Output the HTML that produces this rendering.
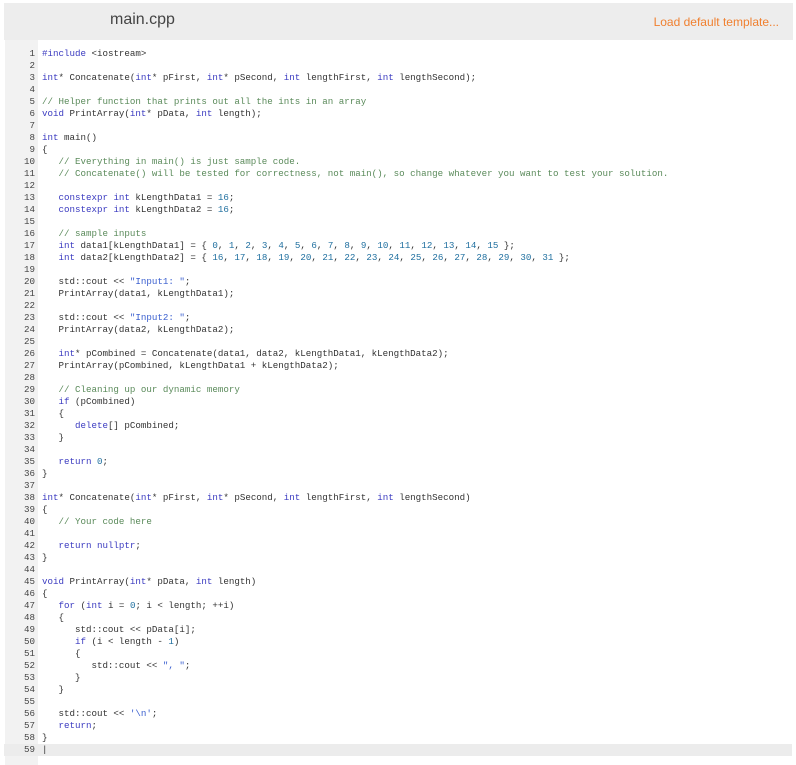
<!DOCTYPE html>
<html><head><meta charset="utf-8"><style>
body{margin:0;background:#fff;width:796px;height:765px;overflow:hidden;font-family:"Liberation Sans",sans-serif}
.wrap{position:absolute;left:4px;top:3px;width:789px;height:762px;background:#fff}
.hdr{position:absolute;left:0;top:0;width:789px;height:37px;background:#ededed}
.title{position:absolute;left:106px;top:8px;font-size:16px;color:#444}
.load{position:absolute;right:14px;top:12px;font-size:12px;color:#f08030}
.gut{position:absolute;left:1px;top:37px;width:33px;height:725px;background:#f2f2f2}
.code{position:absolute;left:0;top:45px;font-family:"Liberation Mono",monospace;font-size:9.17px;line-height:12px;white-space:pre;color:#333}
.ln{display:inline-block;width:31px;text-align:right;color:#444;padding-right:7px}
.act{background:#ececec;width:788px;display:block}
.k{color:#3a3ac0}.c{color:#5a8a5a}.n{color:#1f6f9f}.s{color:#3a5fcf}
</style></head><body><div class="wrap"><div class="hdr"><div class="title">main.cpp</div><div class="load">Load default template...</div></div><div class="gut"></div>
<div class="code"><span class="ln">1</span><span class="k">#include</span> &lt;iostream&gt;
<span class="ln">2</span>
<span class="ln">3</span><span class="k">int</span>* Concatenate(<span class="k">int</span>* pFirst, <span class="k">int</span>* pSecond, <span class="k">int</span> lengthFirst, <span class="k">int</span> lengthSecond);
<span class="ln">4</span>
<span class="ln">5</span><span class="c">// Helper function that prints out all the ints in an array</span>
<span class="ln">6</span><span class="k">void</span> PrintArray(<span class="k">int</span>* pData, <span class="k">int</span> length);
<span class="ln">7</span>
<span class="ln">8</span><span class="k">int</span> main()
<span class="ln">9</span>{
<span class="ln">10</span>   <span class="c">// Everything in main() is just sample code.</span>
<span class="ln">11</span>   <span class="c">// Concatenate() will be tested for correctness, not main(), so change whatever you want to test your solution.</span>
<span class="ln">12</span>
<span class="ln">13</span>   <span class="k">constexpr</span> <span class="k">int</span> kLengthData1 = <span class="n">16</span>;
<span class="ln">14</span>   <span class="k">constexpr</span> <span class="k">int</span> kLengthData2 = <span class="n">16</span>;
<span class="ln">15</span>
<span class="ln">16</span>   <span class="c">// sample inputs</span>
<span class="ln">17</span>   <span class="k">int</span> data1[kLengthData1] = { <span class="n">0</span>, <span class="n">1</span>, <span class="n">2</span>, <span class="n">3</span>, <span class="n">4</span>, <span class="n">5</span>, <span class="n">6</span>, <span class="n">7</span>, <span class="n">8</span>, <span class="n">9</span>, <span class="n">10</span>, <span class="n">11</span>, <span class="n">12</span>, <span class="n">13</span>, <span class="n">14</span>, <span class="n">15</span> };
<span class="ln">18</span>   <span class="k">int</span> data2[kLengthData2] = { <span class="n">16</span>, <span class="n">17</span>, <span class="n">18</span>, <span class="n">19</span>, <span class="n">20</span>, <span class="n">21</span>, <span class="n">22</span>, <span class="n">23</span>, <span class="n">24</span>, <span class="n">25</span>, <span class="n">26</span>, <span class="n">27</span>, <span class="n">28</span>, <span class="n">29</span>, <span class="n">30</span>, <span class="n">31</span> };
<span class="ln">19</span>
<span class="ln">20</span>   std::cout &lt;&lt; <span class="s">"Input1: "</span>;
<span class="ln">21</span>   PrintArray(data1, kLengthData1);
<span class="ln">22</span>
<span class="ln">23</span>   std::cout &lt;&lt; <span class="s">"Input2: "</span>;
<span class="ln">24</span>   PrintArray(data2, kLengthData2);
<span class="ln">25</span>
<span class="ln">26</span>   <span class="k">int</span>* pCombined = Concatenate(data1, data2, kLengthData1, kLengthData2);
<span class="ln">27</span>   PrintArray(pCombined, kLengthData1 + kLengthData2);
<span class="ln">28</span>
<span class="ln">29</span>   <span class="c">// Cleaning up our dynamic memory</span>
<span class="ln">30</span>   <span class="k">if</span> (pCombined)
<span class="ln">31</span>   {
<span class="ln">32</span>      <span class="k">delete</span>[] pCombined;
<span class="ln">33</span>   }
<span class="ln">34</span>
<span class="ln">35</span>   <span class="k">return</span> <span class="n">0</span>;
<span class="ln">36</span>}
<span class="ln">37</span>
<span class="ln">38</span><span class="k">int</span>* Concatenate(<span class="k">int</span>* pFirst, <span class="k">int</span>* pSecond, <span class="k">int</span> lengthFirst, <span class="k">int</span> lengthSecond)
<span class="ln">39</span>{
<span class="ln">40</span>   <span class="c">// Your code here</span>
<span class="ln">41</span>
<span class="ln">42</span>   <span class="k">return</span> <span class="k">nullptr</span>;
<span class="ln">43</span>}
<span class="ln">44</span>
<span class="ln">45</span><span class="k">void</span> PrintArray(<span class="k">int</span>* pData, <span class="k">int</span> length)
<span class="ln">46</span>{
<span class="ln">47</span>   <span class="k">for</span> (<span class="k">int</span> i = <span class="n">0</span>; i &lt; length; ++i)
<span class="ln">48</span>   {
<span class="ln">49</span>      std::cout &lt;&lt; pData[i];
<span class="ln">50</span>      <span class="k">if</span> (i &lt; length - <span class="n">1</span>)
<span class="ln">51</span>      {
<span class="ln">52</span>         std::cout &lt;&lt; <span class="s">", "</span>;
<span class="ln">53</span>      }
<span class="ln">54</span>   }
<span class="ln">55</span>
<span class="ln">56</span>   std::cout &lt;&lt; <span class="s">'\n'</span>;
<span class="ln">57</span>   <span class="k">return</span>;
<span class="ln">58</span>}
<span class="act"><span class="ln">59</span>|</span></div></div></body></html>
